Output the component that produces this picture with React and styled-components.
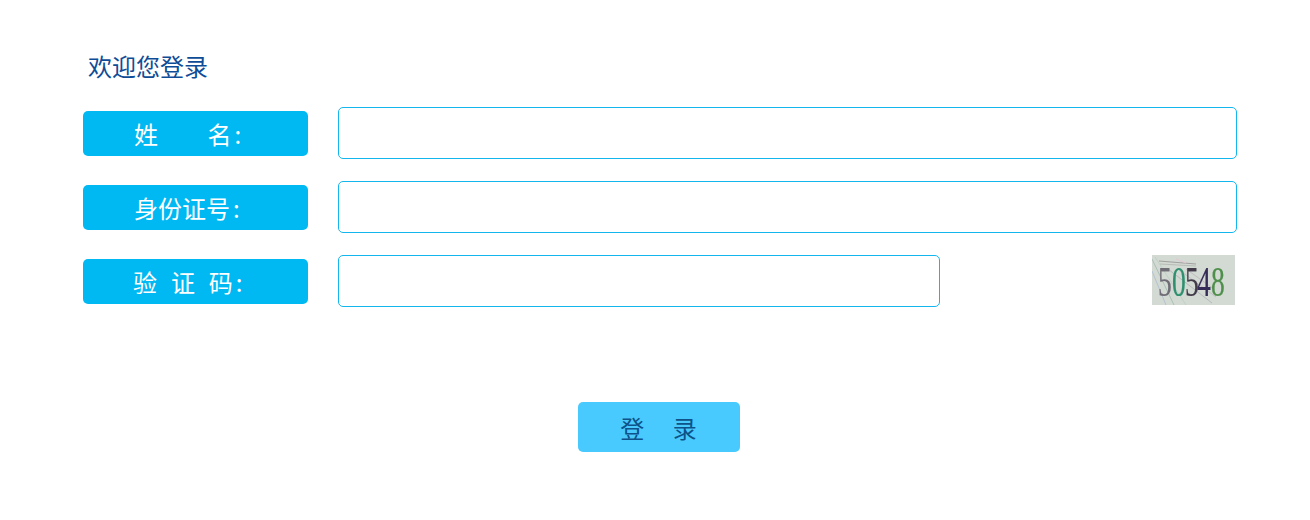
import React from 'react'
import styled, { createGlobalStyle } from 'styled-components'

const GlobalStyle = createGlobalStyle`
  html, body {
    margin: 0;
    padding: 0;
    background: #fff;
    font-family: "Noto Sans CJK SC", "Liberation Sans", sans-serif;
  }
`

const Page = styled.form`
  width: 1310px;
  height: 520px;
  box-sizing: border-box;
  padding: 48px 73px 0 83px;
`

const Title = styled.h1`
  margin: 0 0 23px 5px;
  height: 36px;
  font-size: 24px;
  font-weight: 400;
  line-height: 36px;
  color: #0f4c96;
`

const Rows = styled.div`
  display: flex;
  flex-direction: column;
  gap: 22px;
`

const Row = styled.div`
  display: flex;
  align-items: flex-start;
  gap: 30px;
`

const Label = styled.label`
  flex: none;
  width: 225px;
  height: 45px;
  margin-top: 4px;
  box-sizing: border-box;
  padding-left: ${p => p.$indent}px;
  border-radius: 5px;
  background: #00b8f2;
  color: #fff;
  font-size: 24px;
  line-height: 45px;
  white-space: pre;
  word-spacing: ${p => p.$spread}px;
`

const Colon = styled.span`
  margin-left: 3px;
`

const Input = styled.input`
  display: block;
  flex: ${p => (p.$short ? 'none' : '1')};
  width: ${p => (p.$short ? '602px' : 'auto')};
  height: 52px;
  box-sizing: border-box;
  border: 1px solid #14b6ee;
  border-radius: 5px;
  background: #fff;
  outline: none;
`

const CaptchaWrap = styled.div`
  margin-left: auto;
  margin-right: 2px;
  width: 83px;
  height: 50px;
  overflow: hidden;
`

const CaptchaImage = styled.svg`
  display: block;
  filter: blur(0.35px);
`

const Footer = styled.div`
  display: flex;
  justify-content: center;
  margin: 95px 0 0 -3px;
`

const Submit = styled.button`
  width: 162px;
  height: 50px;
  padding: 1px 0 0;
  border: 0;
  border-radius: 5px;
  background: #49caff;
  color: #0d5288;
  font-family: inherit;
  font-size: 24px;
  line-height: 49px;
  word-spacing: 23px;
`

const digits = [
  { ch: '5', x: 6, fill: '#6f6c76' },
  { ch: '0', x: 20, fill: '#2f9070' },
  { ch: '5', x: 33, fill: '#423c4a' },
  { ch: '4', x: 45, fill: '#352d58' },
  { ch: '8', x: 59, fill: '#4f8f4c' }
]

const Captcha = () => (
  <CaptchaImage width="83" height="50" viewBox="0 0 83 50">
    <rect width="83" height="50" fill="#d3d9d3" />
    <g fill="none" strokeWidth="1">
      <path d="M0 4 L22 50" stroke="#a9c0b8" />
      <path d="M3 2 L34 50" stroke="#bfd0c8" />
      <path d="M0 16 L14 50" stroke="#b4c2d0" />
      <path d="M7 6 L44 9" stroke="#a0a0a0" />
      <path d="M8 9 L44 11" stroke="#b8bcb8" />
      <path d="M16 14 L60 48" stroke="#b9b9bd" />
      <path d="M26 14 L64 42" stroke="#c2c0c4" />
      <path d="M34 14 L62 34" stroke="#c0bcc2" />
      <path d="M24 4 L34 8" stroke="#e2c8d6" />
    </g>
    {digits.map((d, i) => (
      <text
        key={i}
        fill={d.fill}
        stroke={d.fill}
        strokeWidth="0.15"
        fontFamily="Liberation Serif, serif"
        fontSize="26"
        transform={`translate(${d.x} 41) scale(1.06 1.6)`}
      >
        {d.ch}
      </text>
    ))}
  </CaptchaImage>
)

export default function App () {
  return (
    <Page onSubmit={e => e.preventDefault()}>
      <GlobalStyle />
      <Title>欢迎您登录</Title>
      <Rows>
        <Row>
          <Label $indent={51} $spread={44}>姓 名<Colon>:</Colon></Label>
          <Input />
        </Row>
        <Row>
          <Label $indent={51} $spread={0}>身份证号<Colon>:</Colon></Label>
          <Input />
        </Row>
        <Row>
          <Label $indent={50} $spread={8.5}>验 证 码<Colon>:</Colon></Label>
          <Input $short />
          <CaptchaWrap><Captcha /></CaptchaWrap>
        </Row>
      </Rows>
      <Footer>
        <Submit>登 录</Submit>
      </Footer>
    </Page>
  )
}
